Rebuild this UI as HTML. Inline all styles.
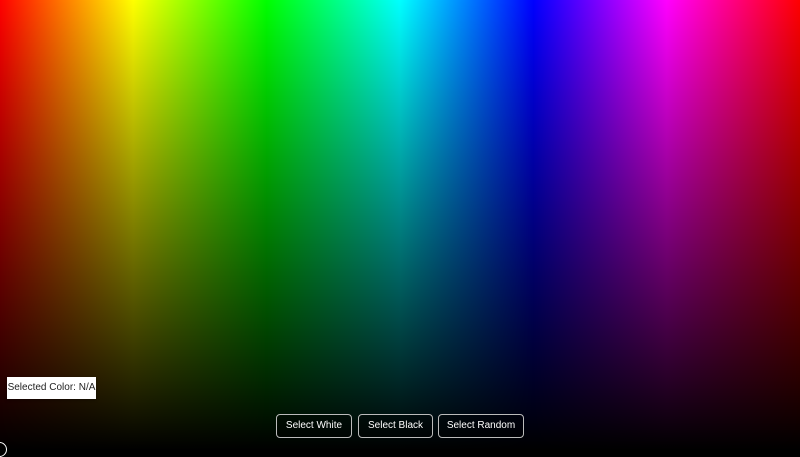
<!DOCTYPE html>
<html><head><style>
html,body{margin:0;padding:0;width:800px;height:450px;overflow:hidden;background:#000}
*{box-sizing:border-box}
.g{position:absolute;inset:0;background:linear-gradient(to right,#f00 0%,#ff0 16.67%,#0f0 33.33%,#0ff 50%,#00f 66.67%,#f0f 83.33%,#f00 100%)}
.v{position:absolute;inset:0;background:linear-gradient(to bottom,rgba(0,0,0,0) 0%,rgba(0,0,0,1) 100%)}
.lbl{position:absolute;left:7px;top:377px;width:89px;height:22px;background:#fff;font:10px "Liberation Sans",sans-serif;color:#222;line-height:22px;text-align:center;white-space:nowrap;box-shadow:0 1px 3px rgba(0,0,0,.4)}
.b{position:absolute;top:414px;height:24px;border:1px solid #bbb;border-radius:4px;background:rgba(0,0,0,.3);color:#fff;font:10px "Liberation Sans",sans-serif;line-height:22px;text-align:center;white-space:nowrap}
.c{position:absolute;left:-8px;top:442px;width:15px;height:15px;border:1.5px solid #fff;border-radius:50%}
</style></head><body>
<div class="g"></div><div class="v"></div>
<div class="lbl">Selected Color: N/A</div>
<div class="b" style="left:276px;width:76px">Select White</div>
<div class="b" style="left:358px;width:75px">Select Black</div>
<div class="b" style="left:438px;width:86px">Select Random</div>
<div class="c"></div>
</body></html>
